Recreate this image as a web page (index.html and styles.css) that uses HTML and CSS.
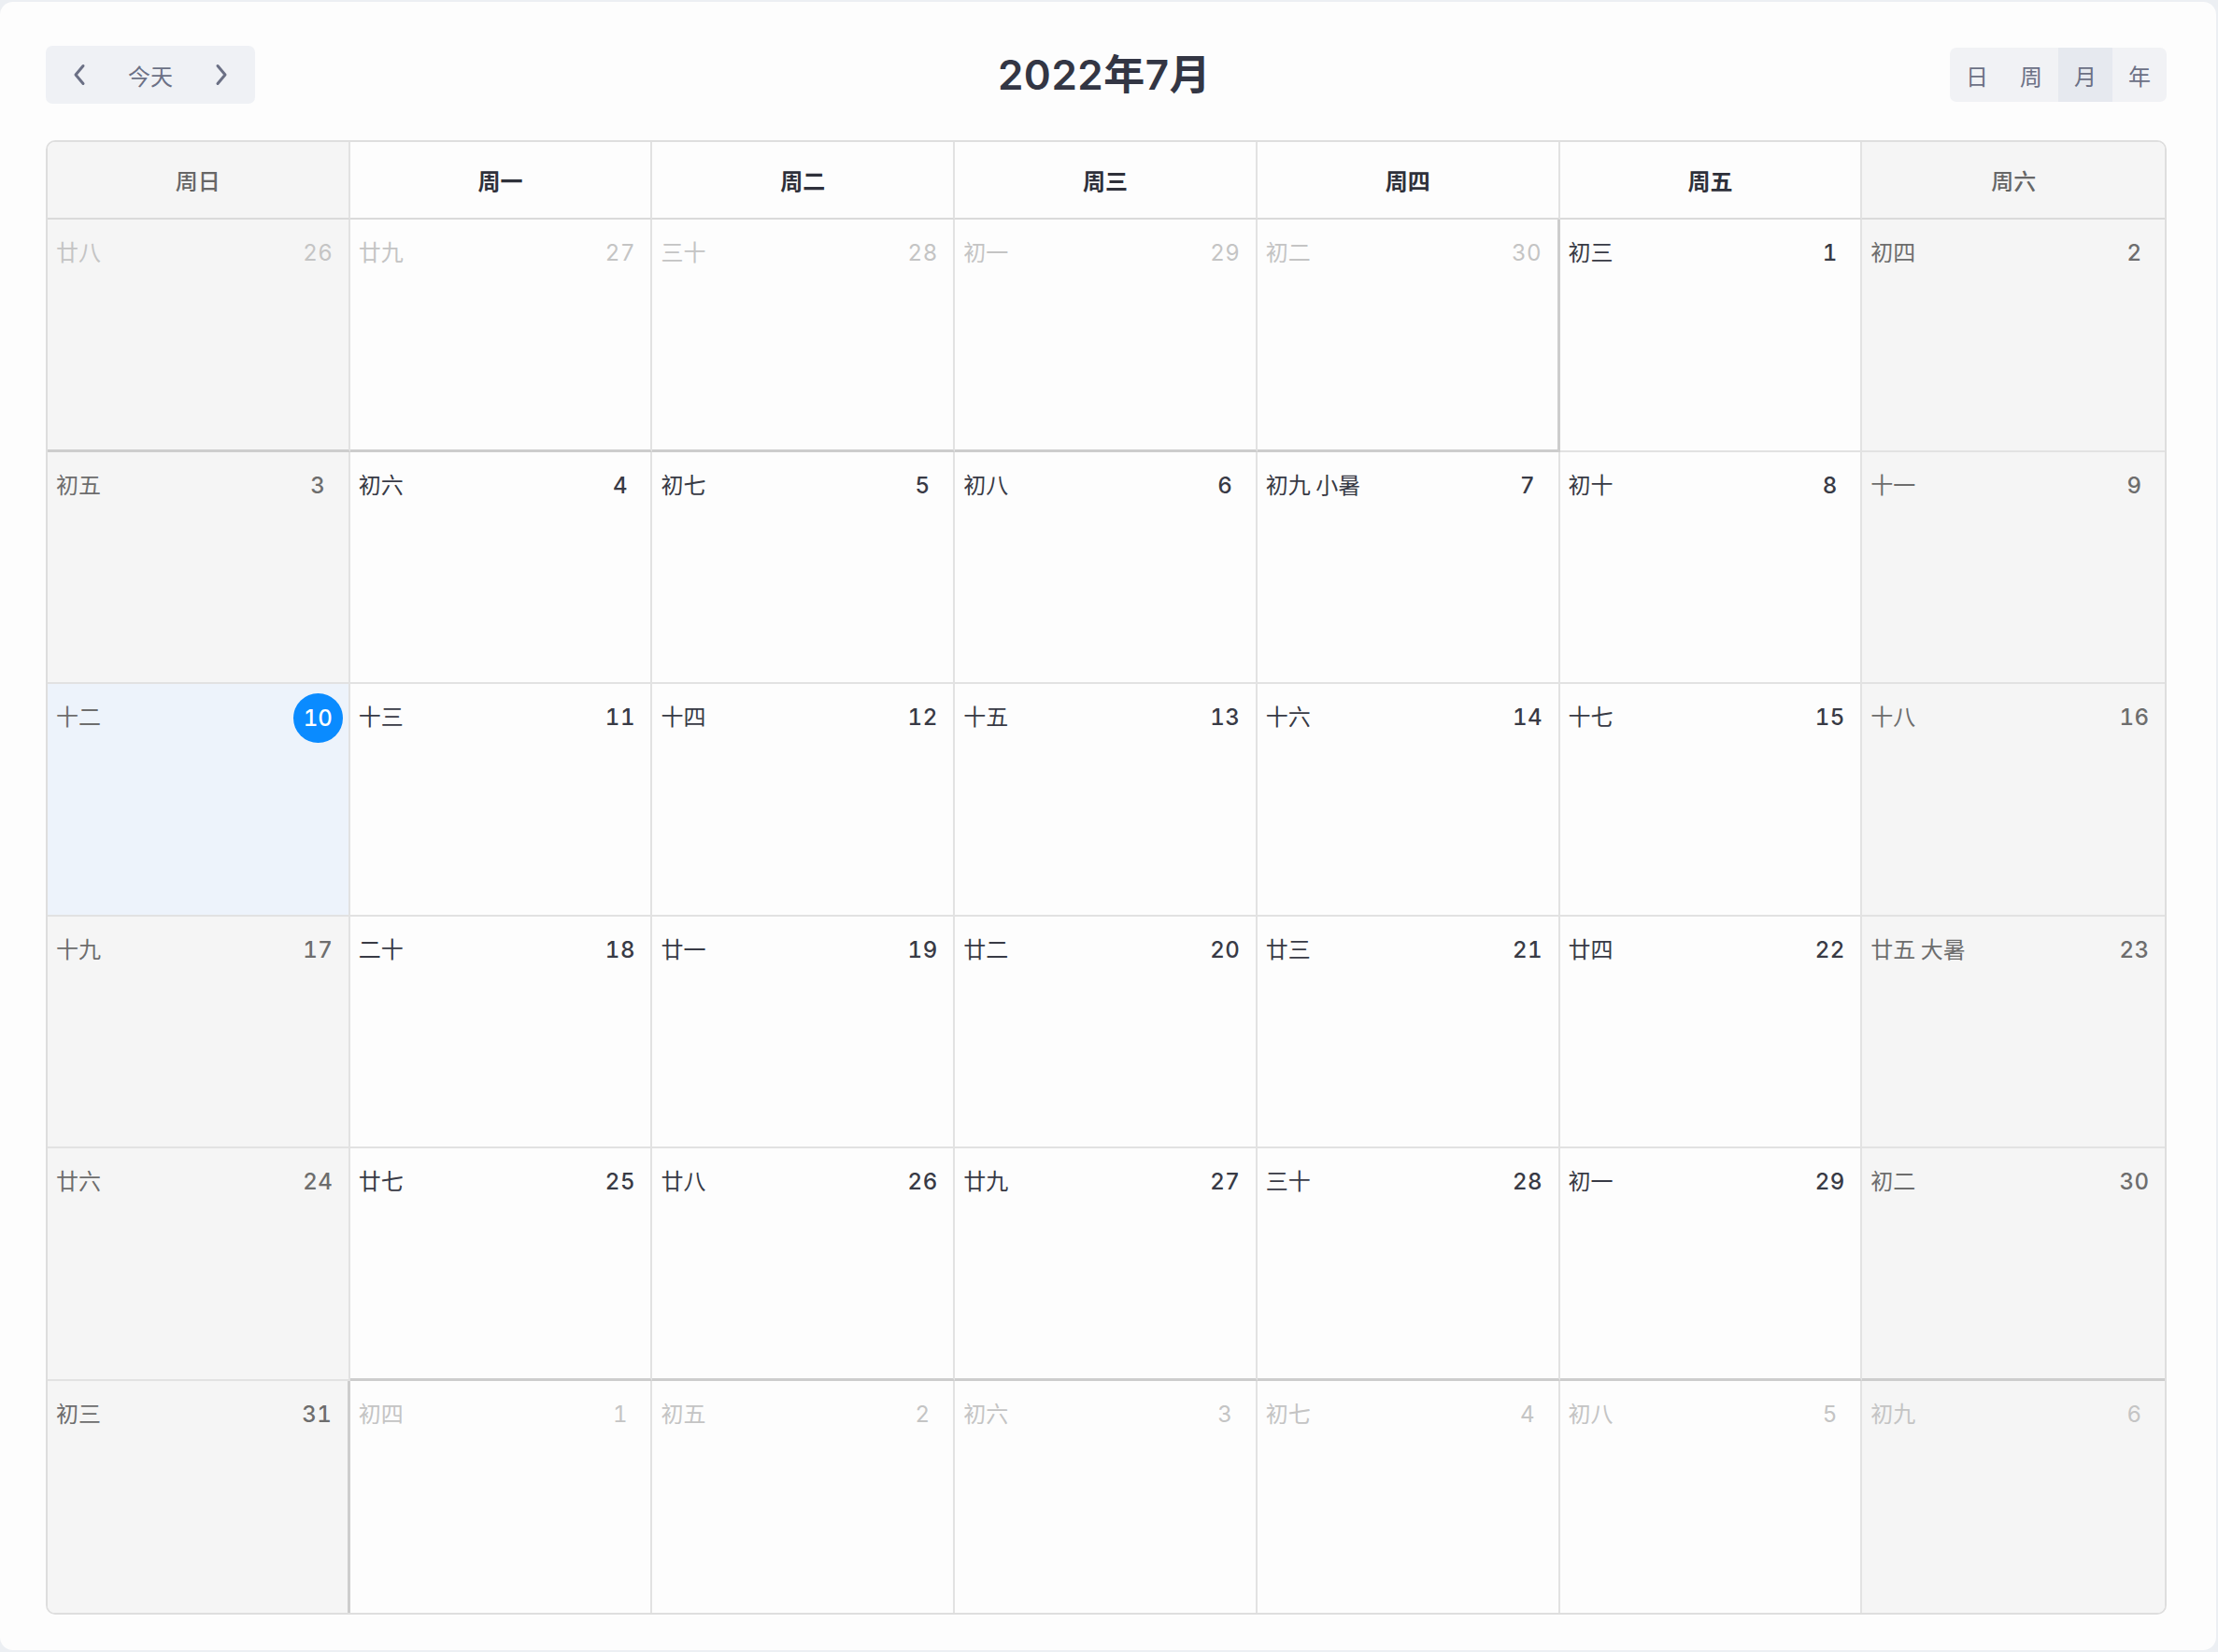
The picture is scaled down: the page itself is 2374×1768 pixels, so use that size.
FILE: index.html
```html
<!DOCTYPE html>
<html lang="zh-CN">
<head>
<meta charset="utf-8">
<title>2022年7月</title>
<link rel="stylesheet" href="styles.css">
</head>
<body>
<div class="card">
  <div class="toolbar">
    <div class="nav">
      <button class="nav-btn arrow" aria-label="上一月">
        <svg width="14" height="24" viewBox="0 0 14 24"><path d="M11 2.5 L3 12 L11 21.5" fill="none" stroke="#6b7085" stroke-width="3" stroke-linecap="round" stroke-linejoin="round"/></svg>
      </button>
      <button class="nav-btn today">今天</button>
      <button class="nav-btn arrow" aria-label="下一月">
        <svg width="14" height="24" viewBox="0 0 14 24"><path d="M3 2.5 L11 12 L3 21.5" fill="none" stroke="#6b7085" stroke-width="3" stroke-linecap="round" stroke-linejoin="round"/></svg>
      </button>
    </div>
    <h1 class="title">2022年7月</h1>
    <div class="views">
      <span class="view">日</span>
      <span class="view">周</span>
      <span class="view active">月</span>
      <span class="view">年</span>
    </div>
  </div>

  <div class="calendar">
    <div class="head weekend">周日</div>
    <div class="head">周一</div>
    <div class="head">周二</div>
    <div class="head">周三</div>
    <div class="head">周四</div>
    <div class="head">周五</div>
    <div class="head weekend last-col">周六</div>

    <!-- row 1 -->
    <div class="cell weekend other mb"><span class="lunar">廿八</span><span class="num">26</span></div>
    <div class="cell other mb"><span class="lunar">廿九</span><span class="num">27</span></div>
    <div class="cell other mb"><span class="lunar">三十</span><span class="num">28</span></div>
    <div class="cell other mb"><span class="lunar">初一</span><span class="num">29</span></div>
    <div class="cell other mb mr"><span class="lunar">初二</span><span class="num">30</span></div>
    <div class="cell"><span class="lunar">初三</span><span class="num">1</span></div>
    <div class="cell weekend last-col"><span class="lunar">初四</span><span class="num">2</span></div>

    <!-- row 2 -->
    <div class="cell weekend"><span class="lunar">初五</span><span class="num">3</span></div>
    <div class="cell"><span class="lunar">初六</span><span class="num">4</span></div>
    <div class="cell"><span class="lunar">初七</span><span class="num">5</span></div>
    <div class="cell"><span class="lunar">初八</span><span class="num">6</span></div>
    <div class="cell"><span class="lunar">初九 小暑</span><span class="num">7</span></div>
    <div class="cell"><span class="lunar">初十</span><span class="num">8</span></div>
    <div class="cell weekend last-col"><span class="lunar">十一</span><span class="num">9</span></div>

    <!-- row 3 -->
    <div class="cell weekend today"><span class="lunar">十二</span><span class="num badge">10</span></div>
    <div class="cell"><span class="lunar">十三</span><span class="num">11</span></div>
    <div class="cell"><span class="lunar">十四</span><span class="num">12</span></div>
    <div class="cell"><span class="lunar">十五</span><span class="num">13</span></div>
    <div class="cell"><span class="lunar">十六</span><span class="num">14</span></div>
    <div class="cell"><span class="lunar">十七</span><span class="num">15</span></div>
    <div class="cell weekend last-col"><span class="lunar">十八</span><span class="num">16</span></div>

    <!-- row 4 -->
    <div class="cell weekend"><span class="lunar">十九</span><span class="num">17</span></div>
    <div class="cell"><span class="lunar">二十</span><span class="num">18</span></div>
    <div class="cell"><span class="lunar">廿一</span><span class="num">19</span></div>
    <div class="cell"><span class="lunar">廿二</span><span class="num">20</span></div>
    <div class="cell"><span class="lunar">廿三</span><span class="num">21</span></div>
    <div class="cell"><span class="lunar">廿四</span><span class="num">22</span></div>
    <div class="cell weekend last-col"><span class="lunar">廿五 大暑</span><span class="num">23</span></div>

    <!-- row 5 -->
    <div class="cell weekend"><span class="lunar">廿六</span><span class="num">24</span></div>
    <div class="cell mb"><span class="lunar">廿七</span><span class="num">25</span></div>
    <div class="cell mb"><span class="lunar">廿八</span><span class="num">26</span></div>
    <div class="cell mb"><span class="lunar">廿九</span><span class="num">27</span></div>
    <div class="cell mb"><span class="lunar">三十</span><span class="num">28</span></div>
    <div class="cell mb"><span class="lunar">初一</span><span class="num">29</span></div>
    <div class="cell weekend last-col mb"><span class="lunar">初二</span><span class="num">30</span></div>

    <!-- row 6 -->
    <div class="cell weekend last-row mr"><span class="lunar">初三</span><span class="num">31</span></div>
    <div class="cell other last-row"><span class="lunar">初四</span><span class="num">1</span></div>
    <div class="cell other last-row"><span class="lunar">初五</span><span class="num">2</span></div>
    <div class="cell other last-row"><span class="lunar">初六</span><span class="num">3</span></div>
    <div class="cell other last-row"><span class="lunar">初七</span><span class="num">4</span></div>
    <div class="cell other last-row"><span class="lunar">初八</span><span class="num">5</span></div>
    <div class="cell weekend other last-row last-col"><span class="lunar">初九</span><span class="num">6</span></div>
  </div>
</div>
</body>
</html>
```

FILE: styles.css
```css
* {
  box-sizing: border-box;
}

html, body {
  margin: 0;
  padding: 0;
}

body {
  background: #eceff3;
  font-family: "Noto Sans CJK SC", sans-serif;
  color: #33353f;
  padding: 2px 2px 0 0;
  height: 1768px;
  overflow: hidden;
}

.card {
  background: #fdfdfd;
  border-radius: 14px;
  height: 1764px;
  padding: 47px 53px 0 49px;
}

.toolbar {
  display: grid;
  grid-template-columns: 1fr auto 1fr;
  align-items: center;
  height: 62px;
  margin-bottom: 39px;
}

.nav {
  justify-self: start;
  display: flex;
  height: 62px;
  background: #eff1f5;
  border-radius: 7px;
}

.nav-btn {
  border: 0;
  background: transparent;
  padding: 0;
  margin: 0;
  display: flex;
  align-items: center;
  justify-content: center;
  font-family: "Noto Sans CJK SC", sans-serif;
  font-size: 24px;
  color: #6b7085;
}

.nav-btn.arrow {
  width: 72px;
}

.nav-btn.today {
  width: 80px;
}

.title {
  margin: 0;
  font-family: "Inter", "Noto Sans CJK SC", sans-serif;
  font-size: 44px;
  font-weight: 600;
  color: #333644;
  line-height: 62px;
  letter-spacing: 0.5px;
  transform: translateX(-2px);
}

.views {
  justify-self: end;
  display: flex;
  height: 58px;
  background: #f1f2f5;
  border-radius: 7px;
  overflow: hidden;
}

.view {
  width: 58px;
  display: flex;
  align-items: center;
  justify-content: center;
  font-size: 24px;
  color: #6b7085;
}

.view.active {
  background: #e6e9ef;
}

.calendar {
  display: grid;
  grid-template-columns: repeat(7, 1fr);
  grid-template-rows: 83px repeat(6, 1fr);
  height: 1578px;
  border: 2px solid #dedede;
  border-radius: 10px;
  overflow: hidden;
  background: #fdfdfd;
}

.head {
  display: flex;
  align-items: center;
  justify-content: center;
  font-size: 24px;
  font-weight: 700;
  color: #2e303a;
  border-right: 2px solid #e2e2e2;
  border-bottom: 2px solid #dadada;
}

.head.weekend {
  background: #f5f5f5;
  font-weight: 500;
  color: #666;
}

.cell {
  display: flex;
  justify-content: space-between;
  align-items: flex-start;
  padding: 18px 18px 0 9px;
  font-size: 24px;
  line-height: 32px;
  color: #383a45;
  border-right: 2px solid #e2e2e2;
  border-bottom: 2px solid #e2e2e2;
}

.cell .num {
  display: flex;
  justify-content: center;
  width: 53px;
  margin: 2px -12px 0 0;
  font-family: "Inter", "Noto Sans CJK SC", sans-serif;
  font-size: 24px;
  font-weight: 500;
  letter-spacing: 0.5px;
  font-variant-numeric: tabular-nums;
}

.cell.weekend {
  background: #f5f5f5;
  color: #6d6d6d;
}

.cell.other {
  color: #c4c4c4;
}

.cell.other .num {
  font-weight: 400;
}

.cell.today {
  background: #edf3fb;
}

.cell .num.badge {
  align-items: center;
  height: 53px;
  margin: -8px -12px 0 0;
  border-radius: 50%;
  background: #0a8bff;
  color: #fff;
  letter-spacing: 0;
}

.last-col {
  border-right: 0;
}

.last-row {
  border-bottom: 0;
}

.cell.mb {
  border-bottom: 3px solid #cdcdcd;
}

.cell.mr {
  border-right: 3px solid #cdcdcd;
}
```
